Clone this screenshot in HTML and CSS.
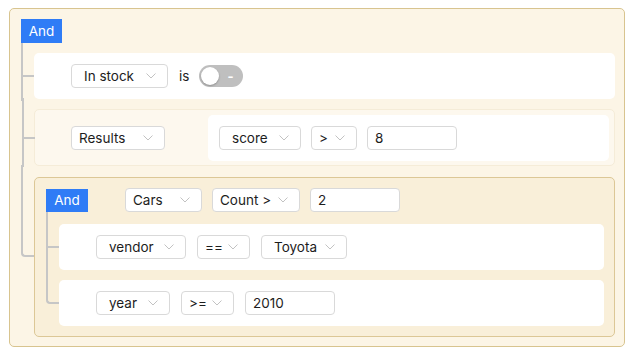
FILE: index.html
```html
<!DOCTYPE html>
<html lang="en">
<head>
  <meta charset="UTF-8">
  <meta name="viewport" content="width=device-width, initial-scale=1.0">
  <title>Query builder</title>
  <link rel="stylesheet" href="styles.css">
</head>
<body>

<div class="group">
  <div class="group-head">
    <span class="conj">And</span>
  </div>
  <div class="children">

    <div class="item rule">
      <div class="sel pad-wide w97">In stock
        <svg class="chev" width="10" height="6" viewBox="0 0 10 6"><path d="M0.5 0.5 L5 5 L9.5 0.5"/></svg>
      </div>
      <span class="op-text">is</span>
      <div class="toggle">
        <span class="knob"></span>
        <span class="toggle-label">-</span>
      </div>
    </div>

    <div class="item rule-group">
      <div class="sel w94">Results
        <svg class="chev" width="10" height="6" viewBox="0 0 10 6"><path d="M0.5 0.5 L5 5 L9.5 0.5"/></svg>
      </div>
      <div class="subrule">
        <div class="sel pad-wide w82">score
          <svg class="chev" width="10" height="6" viewBox="0 0 10 6"><path d="M0.5 0.5 L5 5 L9.5 0.5"/></svg>
        </div>
        <div class="sel w46">&gt;
          <svg class="chev" width="10" height="6" viewBox="0 0 10 6"><path d="M0.5 0.5 L5 5 L9.5 0.5"/></svg>
        </div>
        <div class="field">8</div>
      </div>
    </div>

    <div class="item group nested">
      <div class="group-head">
        <span class="conj">And</span>
        <div class="head-fields">
          <div class="sel w77">Cars
            <svg class="chev" width="10" height="6" viewBox="0 0 10 6"><path d="M0.5 0.5 L5 5 L9.5 0.5"/></svg>
          </div>
          <div class="sel w88">Count &gt;
            <svg class="chev" width="10" height="6" viewBox="0 0 10 6"><path d="M0.5 0.5 L5 5 L9.5 0.5"/></svg>
          </div>
          <div class="field">2</div>
        </div>
      </div>
      <div class="children">
        <div class="item rule">
          <div class="sel pad-wide w90">vendor
            <svg class="chev" width="10" height="6" viewBox="0 0 10 6"><path d="M0.5 0.5 L5 5 L9.5 0.5"/></svg>
          </div>
          <div class="sel w53">==
            <svg class="chev" width="10" height="6" viewBox="0 0 10 6"><path d="M0.5 0.5 L5 5 L9.5 0.5"/></svg>
          </div>
          <div class="sel pad-wide w86">Toyota
            <svg class="chev" width="10" height="6" viewBox="0 0 10 6"><path d="M0.5 0.5 L5 5 L9.5 0.5"/></svg>
          </div>
        </div>
        <div class="item rule">
          <div class="sel pad-wide w74">year
            <svg class="chev" width="10" height="6" viewBox="0 0 10 6"><path d="M0.5 0.5 L5 5 L9.5 0.5"/></svg>
          </div>
          <div class="sel w53">&gt;=
            <svg class="chev" width="10" height="6" viewBox="0 0 10 6"><path d="M0.5 0.5 L5 5 L9.5 0.5"/></svg>
          </div>
          <div class="field">2010</div>
        </div>
      </div>
    </div>

  </div>
</div>

</body>
</html>
```

FILE: styles.css
```css
body {
  margin: 8px 9px;
  font-family: Inter, "Liberation Sans", sans-serif;
  font-size: 13.5px;
  color: #1d1d1d;
  background: #fff;
}
.group {
  background: #fcf5e6;
  border: 1px solid #d8c48f;
  border-radius: 5px;
  padding: 10px 9px 9px 11px;
}
.group.nested {
  background: #f9efd9;
  border-color: #dcc796;
  padding: 10px 10px 10px 11px;
}
.group-head {
  display: flex;
  align-items: center;
  height: 24px;
  position: relative;
  z-index: 1;
}
.conj {
  display: flex;
  align-items: center;
  justify-content: center;
  width: 41px;
  height: 24px;
  box-sizing: border-box;
  background: #2f7cf6;
  color: #fff;
}
.nested .conj {
  width: 42px;
  height: 23px;
}
.head-fields {
  display: flex;
  align-items: center;
  gap: 10px;
  margin-left: 37px;
}
.children {
  display: flex;
  flex-direction: column;
  padding-left: 13px;
}
.item {
  position: relative;
  margin-top: 10px;
}
.nested > .children > .item:first-child {
  margin-top: 12px;
}
.item.nested {
  margin-top: 11px;
}

/* tree lines */
.item::before {
  content: "";
  position: absolute;
  left: -13px;
  top: -12px;
  bottom: -2px;
  border-left: 2px solid #c6c6c6;
}
.item::after {
  content: "";
  position: absolute;
  left: -13px;
  top: 50%;
  width: 13px;
  height: 2px;
  margin-top: -1px;
  background: #c6c6c6;
}
.item:last-child::before {
  bottom: auto;
  width: 11px;
  height: calc(50% + 11px);
  border-bottom: 2px solid #c6c6c6;
  border-bottom-left-radius: 4px;
}
.item:last-child::after {
  display: none;
}
.group.item::before {
  left: -14px;
  top: -13px;
}

.rule {
  display: flex;
  align-items: center;
  gap: 10px;
  height: 46px;
  box-sizing: border-box;
  padding: 0 10px 0 37px;
  background: #fff;
  border-radius: 5px;
}
.nested .rule {
  gap: 11px;
}
.rule-group {
  display: flex;
  align-items: center;
  padding: 5px 5px 4px 36px;
  background: #fdf8ee;
  border: 1px solid #f5ecd8;
  border-radius: 5px;
}
.subrule {
  flex: 1;
  display: flex;
  align-items: center;
  gap: 10px;
  height: 46px;
  box-sizing: border-box;
  padding: 0 11px;
  margin-left: 43px;
  background: #fff;
  border-radius: 5px;
}
.sel {
  display: flex;
  align-items: center;
  height: 24px;
  box-sizing: border-box;
  padding: 0 11px 0 7px;
  border: 1px solid #d9d9d9;
  border-radius: 4px;
  background: #fff;
  white-space: nowrap;
}
.sel.pad-wide {
  padding-left: 12px;
}
.chev {
  margin-left: auto;
  flex: none;
}
.chev path {
  fill: none;
  stroke: #c2c2c2;
  stroke-width: 1;
}
.w46 { width: 46px; }
.w53 { width: 53px; }
.w74 { width: 74px; }
.w77 { width: 77px; }
.w82 { width: 82px; }
.w86 { width: 86px; }
.w88 { width: 88px; }
.w90 { width: 90px; }
.w94 { width: 94px; }
.w97 { width: 97px; }
.field {
  display: flex;
  align-items: center;
  width: 90px;
  height: 24px;
  box-sizing: border-box;
  padding: 0 7px;
  border: 1px solid #d9d9d9;
  border-radius: 4px;
  background: #fff;
}
.op-text {
  margin-left: 1px;
}
.toggle {
  display: flex;
  align-items: center;
  width: 44px;
  height: 22px;
  box-sizing: border-box;
  padding: 0 2px;
  border-radius: 11px;
  background: #bfbfbf;
}
.knob {
  width: 18px;
  height: 18px;
  border-radius: 50%;
  background: #fff;
  box-shadow: 0 1px 2px rgba(0, 0, 0, 0.25);
}
.toggle-label {
  margin-left: 8px;
  color: #fff;
  font-size: 13px;
  font-weight: 700;
  line-height: 1;
}
```
